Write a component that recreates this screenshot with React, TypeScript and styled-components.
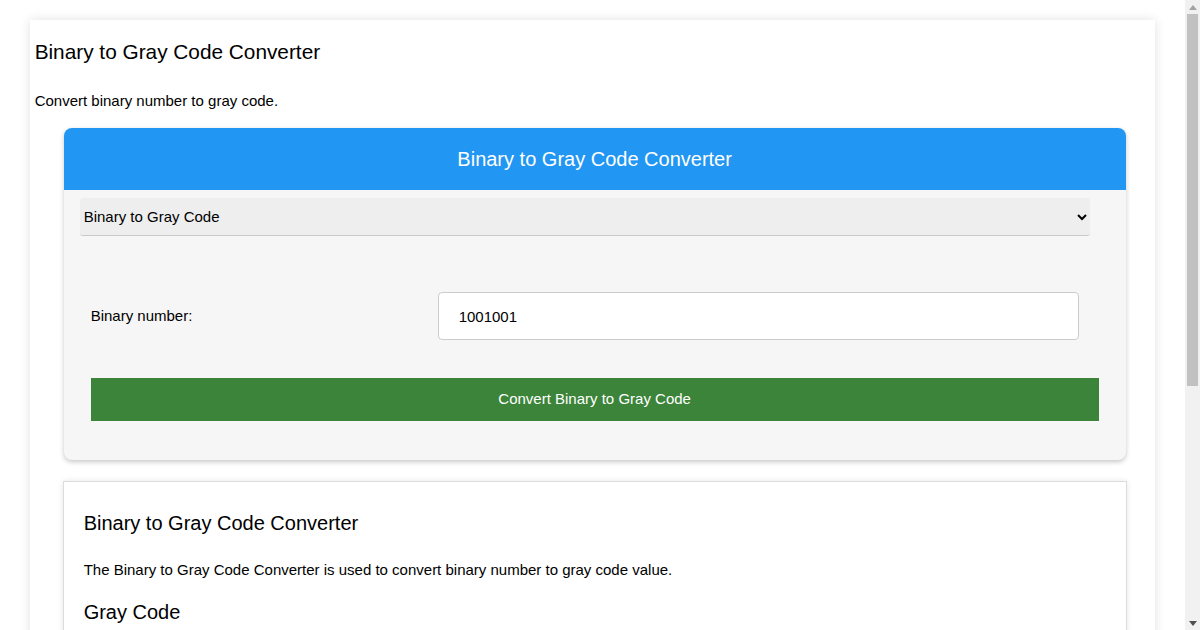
import React, { useState } from "react";
import styled, { createGlobalStyle } from "styled-components";

const GlobalStyle = createGlobalStyle`
  html, body {
    margin: 0;
    padding: 0;
    background: #ffffff;
    height: 100%;
    overflow: hidden;
  }
  body {
    font-family: "Liberation Sans", Arial, sans-serif;
    font-size: 15px;
    color: #000;
  }
  #root { height: 100%; }
  * { box-sizing: border-box; }
`;

const Frame = styled.div`
  display: flex;
  height: 100%;
`;

const Viewport = styled.main`
  flex: 1;
  min-width: 0;
  height: 100%;
  overflow: hidden;
`;

const ScrollTrack = styled.div`
  width: 15px;
  flex: none;
  height: 100%;
  background: #f1f1f1;
  display: flex;
  flex-direction: column;
  align-items: center;
`;

const ScrollArrow = styled.div`
  height: 14px;
  width: 15px;
  display: flex;
  align-items: center;
  justify-content: center;
`;

const ScrollThumb = styled.div`
  width: 11px;
  height: 372px;
  background: #c1c1c1;
`;

const ScrollSpacer = styled.div`
  flex: 1;
`;

const Page = styled.div`
  width: 95%;
  margin: 20px auto 0;
  padding: 5px 5px 40px;
  background: #fff;
  box-shadow: 0 0 10px rgba(0, 0, 0, 0.12);
`;

const PageTitle = styled.h1`
  margin: 15px 0 0;
  font-size: 20.8px;
  font-weight: normal;
  line-height: normal;
`;

const Lead = styled.p`
  margin: 28px 0 0;
  line-height: normal;
`;

const ToolCard = styled.section`
  width: 1062px;
  margin: 19px 0 0 29px;
  background: #f6f6f6;
  border-radius: 8px;
  box-shadow: 0 2px 5px rgba(0, 0, 0, 0.22);
  overflow: hidden;
  padding-bottom: 39px;
`;

const ToolHeader = styled.header`
  height: 62px;
  background: #2196f3;
  color: #fff;
  font-size: 20px;
  display: flex;
  align-items: center;
  justify-content: center;
`;

const ModeSelect = styled.select`
  display: block;
  width: 1010px;
  height: 38px;
  margin: 8px 0 0 16px;
  padding: 0;
  background: #eeeeee;
  border: none;
  border-bottom: 1px solid #c8c8c8;
  border-radius: 3px;
  font-family: inherit;
  font-size: 15px;
  color: #000;
`;

const FieldRow = styled.div`
  display: flex;
  align-items: center;
  margin: 56px 0 0 27px;
`;

const FieldLabel = styled.label`
  width: 347px;
  flex: none;
  margin-top: -1px;
`;

const FieldInput = styled.input`
  width: 641px;
  height: 48px;
  padding: 0 20px;
  background: #fff;
  border: 1px solid #cccccc;
  border-radius: 4px;
  font-family: inherit;
  font-size: 15px;
  color: #000;
  outline: none;
`;

const ConvertButton = styled.button`
  display: block;
  width: 1008px;
  height: 43px;
  margin: 38px 0 0 27px;
  padding: 0 0 2px;
  background: #3b843a;
  color: #fff;
  border: none;
  font-family: inherit;
  font-size: 15px;
  cursor: pointer;
`;

const InfoCard = styled.article`
  width: 1064px;
  min-height: 400px;
  margin: 21px 0 0 28px;
  padding: 10px 20px 30px;
  background: #fff;
  border: 1px solid #dcdcdc;
  box-shadow: 0 0 6px rgba(0, 0, 0, 0.1);
`;

const InfoTitle = styled.h2<{ $gap: number }>`
  margin: ${(p) => p.$gap}px 0 0;
  font-size: 20px;
  font-weight: normal;
  line-height: normal;
`;

const InfoText = styled.p`
  margin: 26px 0 0;
  line-height: normal;
`;

const Triangle = ({ up, color }: { up?: boolean; color: string }) => (
  <svg width="8" height="5" viewBox="0 0 8 5">
    <path d={up ? "M0 5 L4 0 L8 5 Z" : "M0 0 L8 0 L4 5 Z"} fill={color} />
  </svg>
);

export default function App() {
  const [mode, setMode] = useState("b2g");
  const [value, setValue] = useState("1001001");

  return (
    <>
      <GlobalStyle />
      <Frame>
        <Viewport>
          <Page>
            <PageTitle>Binary to Gray Code Converter</PageTitle>
            <Lead>Convert binary number to gray code.</Lead>

            <ToolCard>
              <ToolHeader>Binary to Gray Code Converter</ToolHeader>
              <ModeSelect value={mode} onChange={(e) => setMode(e.target.value)}>
                <option value="b2g">Binary to Gray Code</option>
                <option value="g2b">Gray Code to Binary</option>
              </ModeSelect>
              <FieldRow>
                <FieldLabel htmlFor="bin">Binary number:</FieldLabel>
                <FieldInput
                  id="bin"
                  value={value}
                  onChange={(e) => setValue(e.target.value)}
                />
              </FieldRow>
              <ConvertButton>Convert Binary to Gray Code</ConvertButton>
            </ToolCard>

            <InfoCard>
              <InfoTitle $gap={20}>Binary to Gray Code Converter</InfoTitle>
              <InfoText>
                The Binary to Gray Code Converter is used to convert binary number to gray code value.
              </InfoText>
              <InfoTitle $gap={23}>Gray Code</InfoTitle>
            </InfoCard>
          </Page>
        </Viewport>
        <ScrollTrack aria-hidden="true">
          <ScrollArrow>
            <Triangle up color="#a3a3a3" />
          </ScrollArrow>
          <ScrollThumb />
          <ScrollSpacer />
          <ScrollArrow>
            <Triangle color="#505050" />
          </ScrollArrow>
        </ScrollTrack>
      </Frame>
    </>
  );
}
